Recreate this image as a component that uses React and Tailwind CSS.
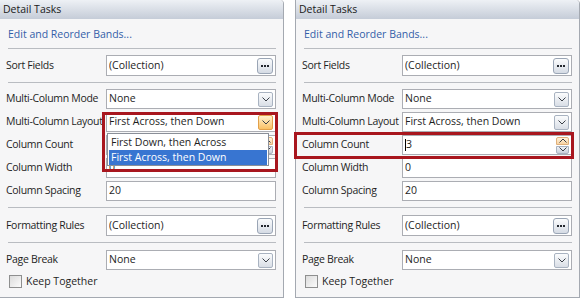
import React from 'react';

function Chevron({ up }) {
  return (
    <svg width="8" height="5" viewBox="0 0 8 5" className="block">
      <path d={up ? 'M0.5 4.5 L4 1 L7.5 4.5' : 'M0.5 0.5 L4 4 L7.5 0.5'} fill="none" stroke="#3a3f47" strokeWidth="1" />
    </svg>
  );
}

function ArrowBtn({ hot }) {
  return (
    <div
      className={`w-[15px] h-[15px] rounded-[2px] border flex items-center justify-center ${
        hot
          ? 'border-[#e2a04a] bg-linear-to-b from-[#fff1cc] to-[#f9c063]'
          : 'border-[#a9b3c1] bg-linear-to-b from-[#fbfcfd] to-[#d9dee6]'
      }`}
    >
      <Chevron />
    </div>
  );
}

function DotsBtn() {
  return (
    <div className="w-[16px] h-[16px] rounded-[3px] border border-[#9aa5b5] bg-linear-to-b from-[#fbfcfd] to-[#d5dbe4] flex items-center justify-center gap-[1px]">
      <span className="w-[2px] h-[2px] bg-[#23272e]" />
      <span className="w-[2px] h-[2px] bg-[#23272e]" />
      <span className="w-[2px] h-[2px] bg-[#23272e]" />
    </div>
  );
}

function Spinner() {
  return (
    <div className="flex flex-col gap-[1px]">
      <div className="w-[13px] h-[8px] rounded-t-[2px] border border-[#e0b07a] bg-linear-to-b from-[#fff3dc] to-[#f7d3a3] flex items-center justify-center">
        <Chevron up />
      </div>
      <div className="w-[13px] h-[8px] rounded-b-[2px] border border-[#a9b3c1] bg-linear-to-b from-[#eef1f5] to-[#c9d0da] flex items-center justify-center">
        <Chevron />
      </div>
    </div>
  );
}

function Row({ label, value, h = 'h-[20px]', right, caret }) {
  return (
    <div className={`flex items-center pl-[6px] ${h}`}>
      <div className="w-[100px] shrink-0 whitespace-nowrap tracking-[-0.3px]">{label}</div>
      <div className="w-[170px] h-full bg-white border border-[#abadb3] flex items-center pl-[2px] pr-[2px]">
        {caret && <span className="w-px h-[12px] bg-black" />}
        <span className="flex-1 whitespace-nowrap overflow-hidden">{value}</span>
        {right}
      </div>
    </div>
  );
}

function Sep() {
  return <div className="h-px bg-[#b9bcc1] ml-[8px] mr-[7px]" />;
}

function Panel({ variant }) {
  const left = variant === 'left';
  return (
    <div
      className={`relative h-[298px] shrink-0 flex flex-col bg-[#f6f6f7] border-r border-b border-[#a4a9b1] rounded-tr-[4px] ${
        left ? 'w-[284px]' : 'w-[285px] border-l'
      }`}
    >
      <div className="h-[19px] shrink-0 flex items-center px-[3px] pt-px bg-linear-to-b from-[#eef1f5] to-[#c5ccd8] rounded-tr-[4px] text-[#1a1a1a]">
        Detail Tasks
      </div>
      <div className="h-[29px] pt-[8px] pl-[8px] text-[#335ea8] leading-[14px]">Edit and Reorder Bands...</div>
      <Sep />
      <div className="pt-[6px] pb-[6px]">
        <Row label="Sort Fields" value="(Collection)" h="h-[21px]" right={<DotsBtn />} />
      </div>
      <Sep />
      <div className="pt-[6px] pb-[6px] flex flex-col gap-[3px]">
        <Row label="Multi-Column Mode" value="None" right={<ArrowBtn />} />
        <Row label="Multi-Column Layout" value="First Across, then Down" right={<ArrowBtn hot={left} />} />
        <Row label="Column Count" value={left ? '' : '3'} caret={!left} right={<Spinner />} />
        <Row label="Column Width" value="0" />
        <Row label="Column Spacing" value="20" />
      </div>
      <Sep />
      <div className="pt-[7px] pb-[6px]">
        <Row label="Formatting Rules" value="(Collection)" h="h-[21px]" right={<DotsBtn />} />
      </div>
      <Sep />
      <div className="pt-[7px]">
        <Row label="Page Break" value="None" right={<ArrowBtn />} />
      </div>
      <div className="pt-[5px] pl-[9px] flex items-center gap-[4px] h-[18px]">
        <span className="w-[13px] h-[13px] border border-[#8e8f8f] bg-linear-to-br from-[#dcdcdc] to-[#fbfbfb]" />
        <span>Keep Together</span>
      </div>

      {left ? (
        <>
          <div className="absolute left-[107px] top-[133px] w-[162px] h-[33px] bg-white border border-[#8a8f98] p-px z-10">
            <div className="h-[15px] pl-[2px] flex items-center whitespace-nowrap">First Down, then Across</div>
            <div className="h-[15px] pl-[2px] flex items-center whitespace-nowrap bg-[#3875d1] text-white">First Across, then Down</div>
          </div>
          <div className="absolute left-[102px] top-[112px] w-[176px] h-[60px] border-[3px] border-[#a8161e] z-20 pointer-events-none" />
        </>
      ) : (
        <div className="absolute left-[-2px] top-[132px] w-[280px] h-[27px] border-[3px] border-[#a8161e] z-20 pointer-events-none" />
      )}
    </div>
  );
}

export default function App() {
  return (
    <div className="w-[581px] h-[299px] bg-white flex gap-[11px] font-['Open_Sans','Noto_Sans',sans-serif] text-[10.5px] text-[#1e1e1e] overflow-hidden">
      <Panel variant="left" />
      <Panel variant="right" />
    </div>
  );
}
